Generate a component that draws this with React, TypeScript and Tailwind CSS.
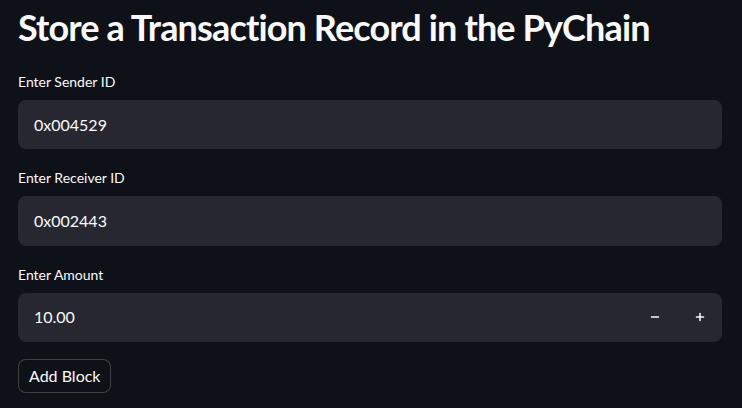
import { Minus, Plus } from "lucide-react"

function TextField({ label, value }: { label: string; value: string }) {
  return (
    <div className="flex flex-col">
      <label className="h-[31px] pt-[3px] text-[14px] leading-[20px] text-[#fafafa]">{label}</label>
      <div className="h-[49.4px] flex items-center px-4 rounded-lg bg-[#262730] text-[16px] text-[#fafafa]">
        {value}
      </div>
    </div>
  )
}

function NumberField({ label, value }: { label: string; value: string }) {
  return (
    <div className="flex flex-col">
      <label className="h-[31px] pt-[3px] text-[14px] leading-[20px] text-[#fafafa]">{label}</label>
      <div className="h-[49.4px] flex rounded-lg bg-[#262730] text-[16px] text-[#fafafa] overflow-hidden">
        <div className="flex-1 flex items-center px-4">{value}</div>
        <button className="w-[45px] flex items-center justify-center">
          <Minus size={12} strokeWidth={3} />
        </button>
        <button className="w-[45px] flex items-center justify-center">
          <Plus size={12} strokeWidth={3} />
        </button>
      </div>
    </div>
  )
}

export default function App() {
  return (
    <div
      className="w-[742px] h-[408px] overflow-hidden bg-[#0e1117] text-[#fafafa] pl-[18px] pr-[20px]"
      style={{ fontFamily: "Lato, sans-serif" }}
    >
      <h1 className="h-[53px] pt-[5px] text-[36px] leading-[44px] font-bold tracking-[-0.024em]">
        Store a Transaction Record in the PyChain
      </h1>
      <div className="flex flex-col gap-4 mt-4">
        <TextField label="Enter Sender ID" value="0x004529" />
        <TextField label="Enter Receiver ID" value="0x002443" />
        <NumberField label="Enter Amount" value="10.00" />
        <div className="pt-px">
          <button className="h-[34px] px-[10px] rounded-lg border border-[#fafafa]/20 bg-[#0e1117] text-[16px] text-[#fafafa]">
            Add Block
          </button>
        </div>
      </div>
    </div>
  )
}
